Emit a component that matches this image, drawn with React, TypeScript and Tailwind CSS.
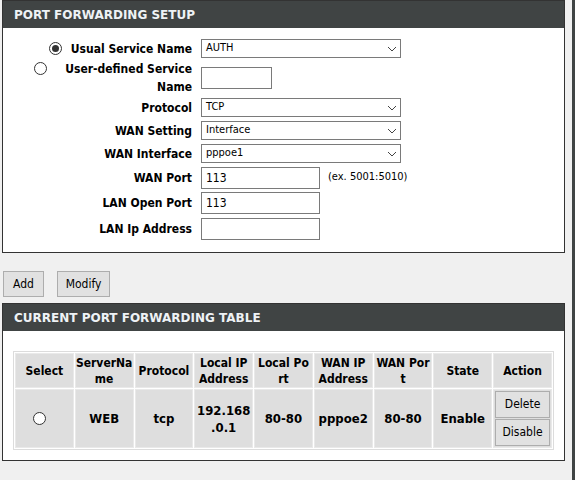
import React from "react";

const body = { fontFamily: '"DejaVu Sans Condensed", "DejaVu Sans", sans-serif' };
const title = { fontFamily: '"DejaVu Sans", sans-serif' };

function Radio({ checked }: { checked?: boolean }) {
  return (
    <span className="inline-flex h-[13px] w-[13px] shrink-0 items-center justify-center rounded-full border border-[#333] bg-white align-middle">
      {checked && <span className="h-[7px] w-[7px] rounded-full bg-[#333]" />}
    </span>
  );
}

function Select({ value }: { value: string }) {
  return (
    <div className="flex h-[19px] w-[200px] items-center justify-between border border-[#7a7a7a] bg-white pl-[4px] pr-[3px] text-[11px] font-normal text-black">
      <span>{value}</span>
      <svg width="10" height="6" viewBox="0 0 10 6" fill="none">
        <path d="M1 1l4 4 4-4" stroke="#444" strokeWidth="1" />
      </svg>
    </div>
  );
}

function Input({ value = "", w }: { value?: string; w: string }) {
  return (
    <div className={`flex h-[22px] ${w} items-center border border-[#7a7a7a] bg-white pl-[4px] text-[12px] font-normal text-black`}>
      {value}
    </div>
  );
}

function Btn({ children, cls }: { children: React.ReactNode; cls: string }) {
  return (
    <div className={`flex items-center justify-center border border-[#adadad] bg-[#e1e1e1] text-[12px] font-normal text-black ${cls}`}>
      {children}
    </div>
  );
}

function Header({ text }: { text: string }) {
  return (
    <div style={title} className="flex h-[27px] items-center bg-[#404444] pl-[11px] text-[12px] font-bold text-[#eef2f5]">
      {text}
    </div>
  );
}

const rows: { label: React.ReactNode; h: string; control: React.ReactNode; extra?: string }[] = [
  { label: "Protocol", h: "h-[23px]", control: <Select value="TCP" /> },
  { label: "WAN Setting", h: "h-[23px]", control: <Select value="Interface" /> },
  { label: "WAN Interface", h: "h-[23px]", control: <Select value="pppoe1" /> },
  { label: "WAN Port", h: "h-[25px]", control: <Input value="113" w="w-[119px]" />, extra: "(ex. 5001:5010)" },
  { label: "LAN Open Port", h: "h-[26px]", control: <Input value="113" w="w-[119px]" /> },
  { label: "LAN Ip Address", h: "h-[25px]", control: <Input w="w-[119px]" /> },
];

const heads: React.ReactNode[] = [
  "Select",
  <>ServerNa<br />me</>,
  "Protocol",
  <>Local IP<br />Address</>,
  <>Local Po<br />rt</>,
  <>WAN IP<br />Address</>,
  <>WAN Por<br />t</>,
  "State",
  "Action",
];

const cell = "border border-[#e9e9e9] bg-[#dedede] p-0 text-center align-middle";

export default function App() {
  return (
    <div style={body} className="flex h-[480px] w-[575px] overflow-hidden bg-[#f0f0f0]">
      <div className="ml-[2px] flex w-[563px] flex-col">
        {/* setup panel */}
        <div className="border border-[#333] bg-white">
          <Header text="PORT FORWARDING SETUP" />
          <div className="flex flex-col pb-[11px] pt-[9px] text-[12px] font-bold text-black">
            <div className="flex h-[23px] items-center">
              <div className="flex w-[189px] items-center justify-end gap-[9px]">
                <Radio checked />
                <span>Usual Service Name</span>
              </div>
              <div className="ml-[9px]">
                <Select value="AUTH" />
              </div>
            </div>
            <div className="flex h-[36px] items-center">
              <div className="w-[189px] text-right leading-[16px]">
                <span className="inline-flex items-center gap-[18px]">
                  <Radio />
                  <span>User-defined Service</span>
                </span>
                <br />
                Name
              </div>
              <div className="ml-[9px]">
                <Input w="w-[71px]" />
              </div>
            </div>
            {rows.map((r, i) => (
              <div key={i} className={`flex items-center ${r.h}`}>
                <div className="w-[189px] text-right">{r.label}</div>
                <div className="ml-[9px]">{r.control}</div>
                {r.extra && <span className="ml-[8px] text-[11px] font-normal">{r.extra}</span>}
              </div>
            ))}
          </div>
        </div>

        <div className="mt-[18px] flex gap-[13px] pl-[1px]">
          <Btn cls="h-[26px] w-[41px]">Add</Btn>
          <Btn cls="h-[26px] w-[53px]">Modify</Btn>
        </div>

        {/* table panel */}
        <div className="mt-[6px] border border-[#333] bg-white">
          <Header text="CURRENT PORT FORWARDING TABLE" />
          <div className="px-[10px] pb-[10px] pt-[20px]">
            <table className="w-[541px] table-fixed border-separate border-spacing-[1px] border border-[#dcdcdc] text-black">
              <tbody>
                <tr className="h-[35px] text-[12px] font-bold leading-[16px]">
                  {heads.map((h, i) => (
                    <td key={i} className={cell}>
                      {h}
                    </td>
                  ))}
                </tr>
                <tr className="h-[59px] text-[13px] font-bold leading-[17px]">
                  <td className={cell}>
                    <div className="flex justify-center pr-[9px]"><Radio /></div>
                  </td>
                  <td className={cell}>WEB</td>
                  <td className={cell}>tcp</td>
                  <td className={cell}>192.168<br />.0.1</td>
                  <td className={cell}>80-80</td>
                  <td className={cell}>pppoe2</td>
                  <td className={cell}>80-80</td>
                  <td className={cell}>Enable</td>
                  <td className="border border-[#e9e9e9] bg-[#dedede] p-[1px]">
                    <div className="flex flex-col gap-[1px]">
                      <Btn cls="h-[27px] w-full">Delete</Btn>
                      <Btn cls="h-[27px] w-full">Disable</Btn>
                    </div>
                  </td>
                </tr>
              </tbody>
            </table>
          </div>
        </div>
      </div>
      <div className="ml-auto h-full w-[3px] bg-[#404444]" />
    </div>
  );
}
